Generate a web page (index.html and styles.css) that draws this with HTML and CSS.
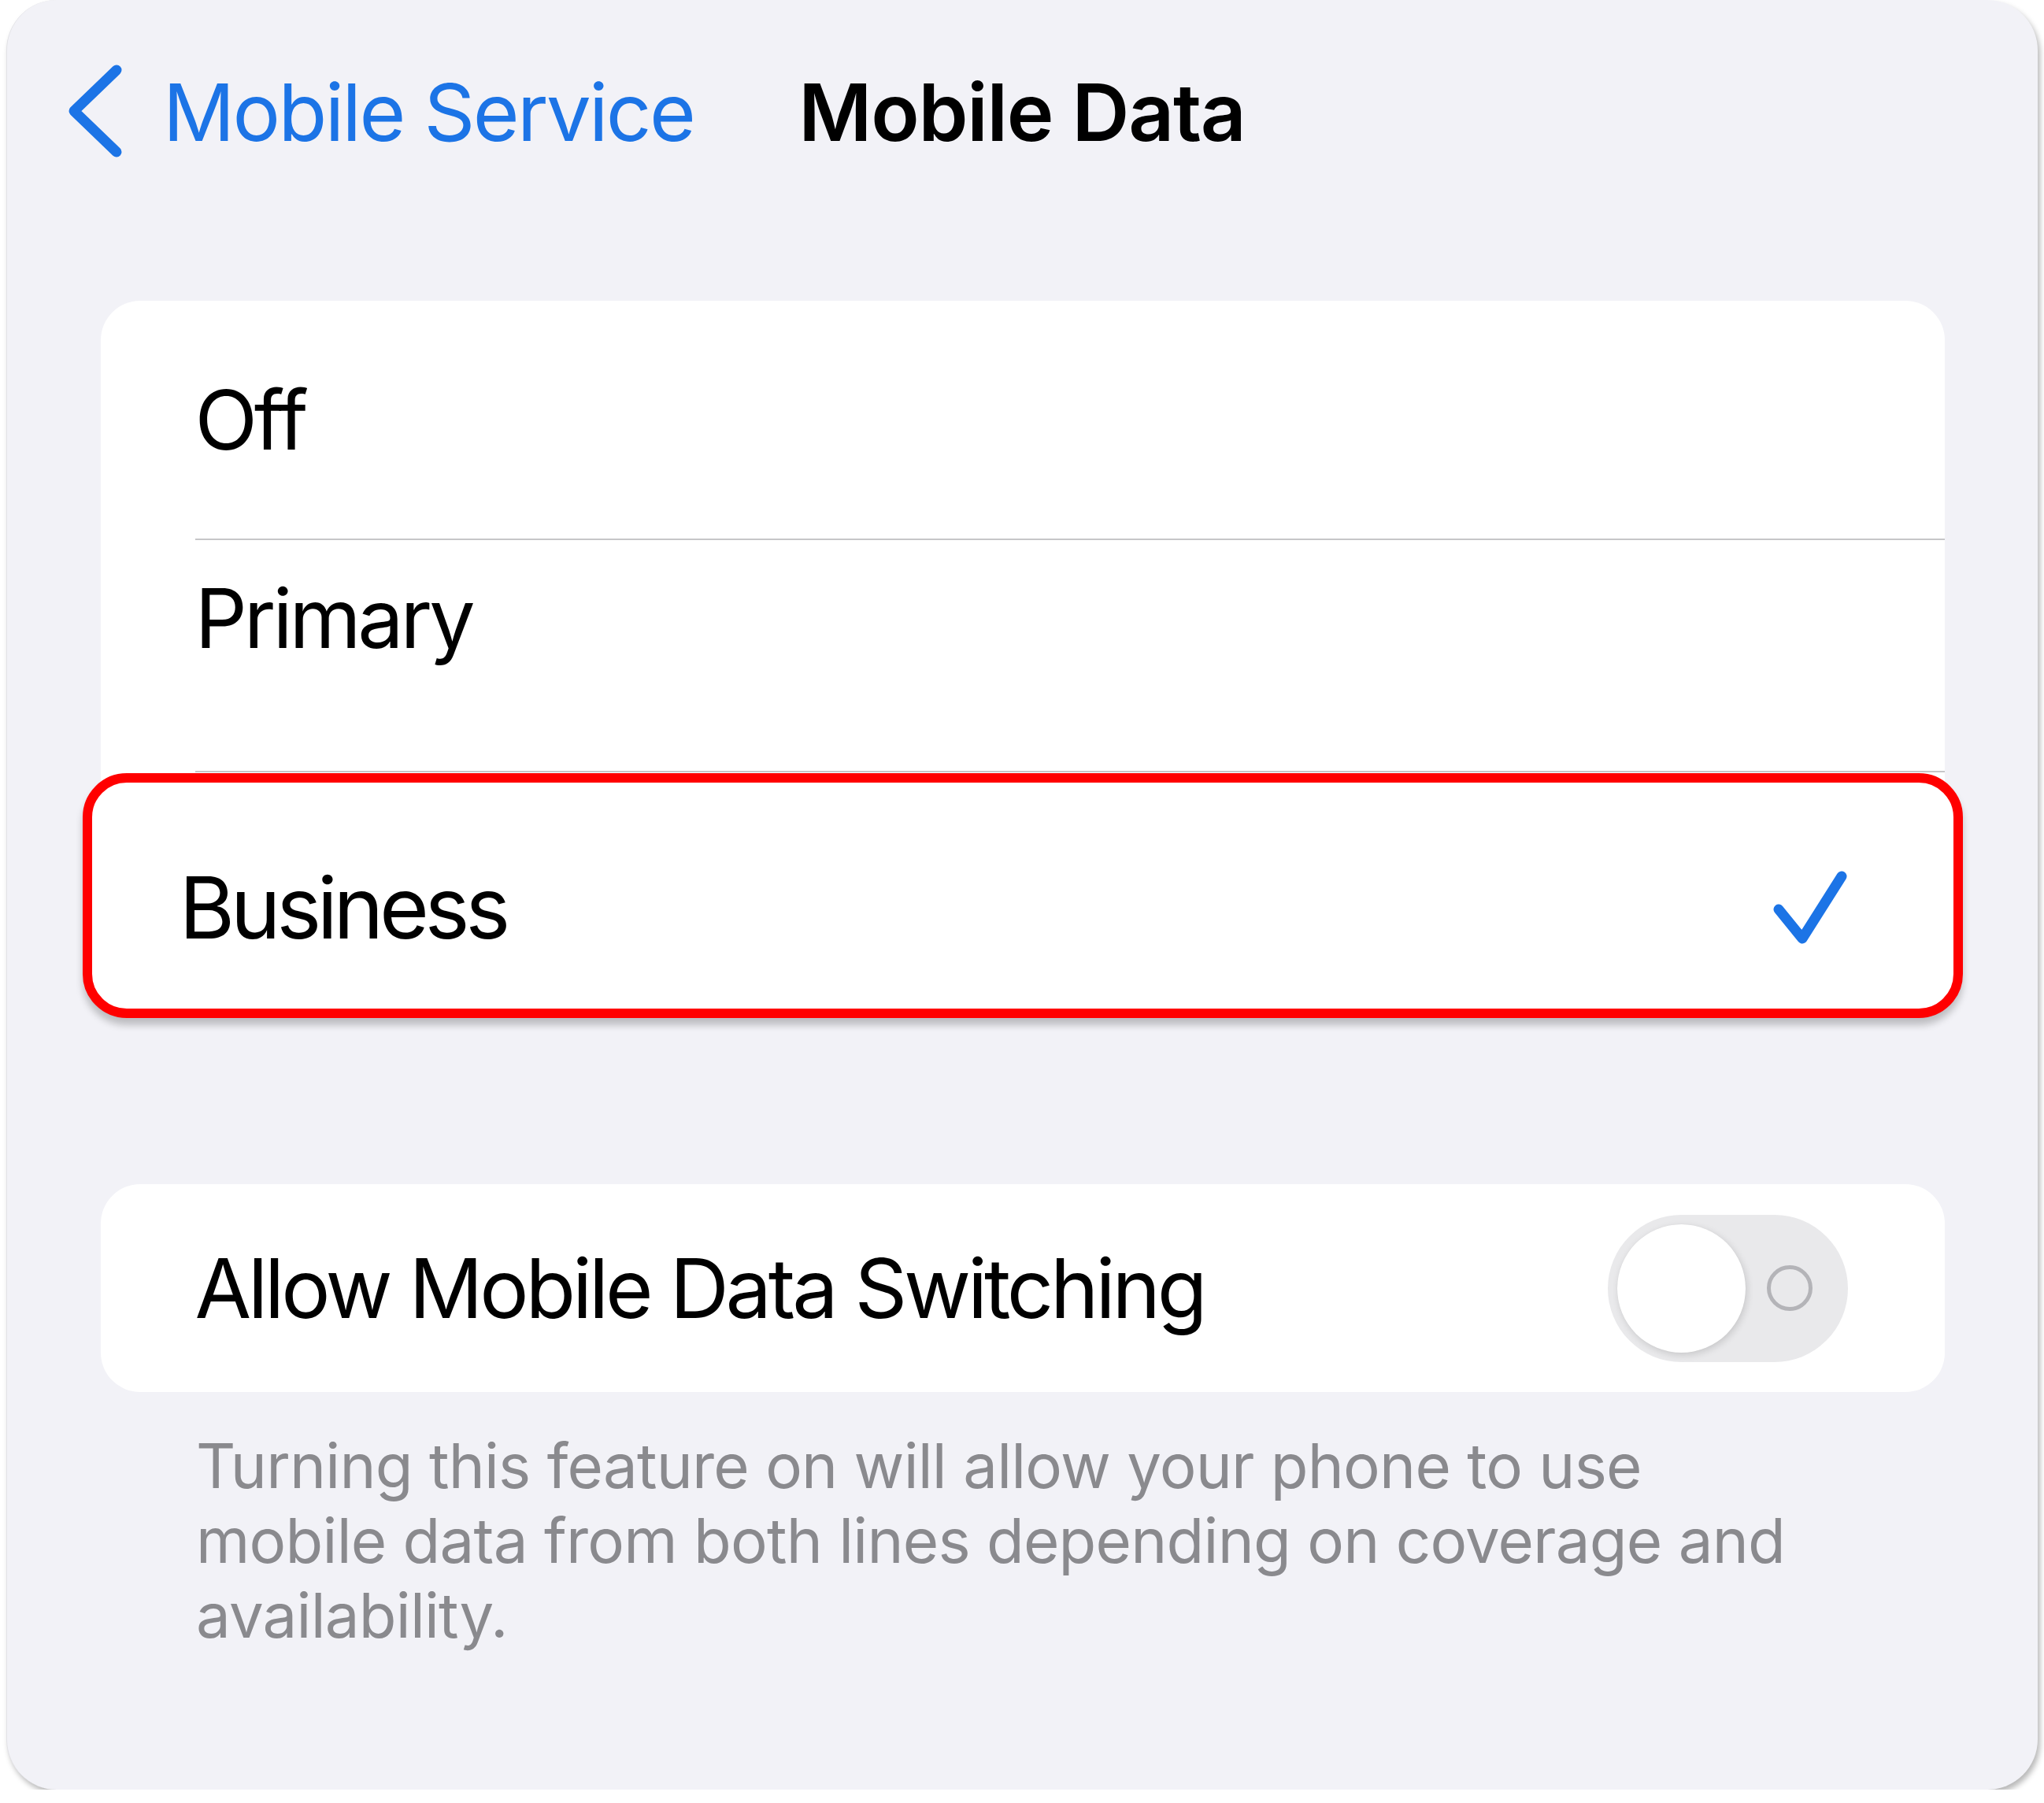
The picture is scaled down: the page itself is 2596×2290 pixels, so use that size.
FILE: index.html
```html
<!DOCTYPE html>
<html lang="en">
<head>
    <meta charset="UTF-8">
    <meta name="viewport" content="width=device-width, initial-scale=1.0">
    <title>Mobile Data</title>
    <link rel="stylesheet" href="styles.css">
</head>
<body>
    <div class="screen">
        <nav>
            <a class="back" href="#">
                <svg class="chevron" width="76" height="124" viewBox="0 0 76 124">
                    <path d="M63 8 L9 60 L63 112" fill="none" stroke="currentColor" stroke-width="13" stroke-linecap="round" stroke-linejoin="round"/>
                </svg>
                <span>Mobile Service</span>
            </a>
            <h1>Mobile Data</h1>
        </nav>

        <div class="group options">
            <div class="option option-off">Off</div>
            <div class="divider"></div>
            <div class="option option-primary">Primary</div>
            <div class="divider"></div>
            <div class="option option-selected">
                <span>Business</span>
                <svg class="check" width="100" height="130" viewBox="0 0 100 130">
                    <path d="M10 82 L40 119 L90 40" fill="none" stroke="currentColor" stroke-width="13" stroke-linecap="round" stroke-linejoin="round"/>
                </svg>
            </div>
        </div>

        <div class="group">
            <div class="option option-toggle">
                <span>Allow Mobile Data Switching</span>
                <div class="switch">
                    <div class="knob"></div>
                    <div class="ring"></div>
                </div>
            </div>
        </div>

        <p class="footnote">Turning this feature on will allow your phone to use mobile data from both lines depending on coverage and availability.</p>
    </div>
</body>
</html>
```

FILE: styles.css
```css
* {
    margin: 0;
    padding: 0;
    box-sizing: border-box;
    font-family: Inter, 'Noto Sans', sans-serif;
}

:root {
    --blue: #1c74e6;
    --page-gray: #f2f2f7;
    --white: #ffffff;
    --separator: #c6c6c8;
    --muted: #8a8a8e;
}

body {
    background-color: var(--white);
    color: #000;
}

.screen {
    width: 2580px;
    height: 2273px;
    margin-left: 8px;
    background-color: var(--page-gray);
    border-radius: 64px;
    box-shadow: 3px 5px 7px rgba(0, 0, 0, 0.28);
    border-left: 1px solid #e2e2e6;
    overflow: hidden;
}

nav {
    height: 286px;
    display: flex;
    align-items: center;
    padding-left: 76px;
}

.back {
    display: flex;
    align-items: center;
    color: var(--blue);
    text-decoration: none;
    font-size: 101px;
    line-height: 1.2;
    letter-spacing: -0.026em;
}

.chevron {
    margin-right: 46px;
}

nav h1 {
    margin-left: 133px;
    font-size: 101px;
    font-weight: 600;
    line-height: 1.2;
    letter-spacing: -0.012em;
}

.group {
    width: 2342px;
    margin: 0 auto;
    background-color: var(--white);
    border-radius: 50px;
}

.options {
    margin-top: 96px;
}

.option {
    display: flex;
    align-items: center;
    padding-left: 120px;
    font-size: 104px;
    line-height: 1.2;
    letter-spacing: -0.04em;
}

.option-off {
    height: 302px;
}

.option-primary {
    height: 293px;
    align-items: flex-start;
    padding-top: 37px;
}

.divider {
    height: 2px;
    margin-left: 120px;
    background-color: var(--separator);
}

/* highlighted choice, drawn a bit wider than its card */
.option-selected {
    height: 311px;
    margin: 1px -23px 0;
    padding: 0 132px 0 111px;
    justify-content: space-between;
    border: 12px solid #ff0000;
    border-radius: 56px;
    background-color: var(--white);
    box-shadow: 0 9px 10px rgba(0, 0, 0, 0.22);
    font-size: 108px;
    letter-spacing: -0.05em;
}

.option-selected span {
    padding-top: 30px;
}

.check {
    color: var(--blue);
}

.group + .group {
    margin-top: 211px;
}

.option-toggle {
    height: 264px;
    justify-content: space-between;
    padding-right: 123px;
}

.switch {
    width: 305px;
    height: 187px;
    border-radius: 94px;
    background-color: #e9e9eb;
    display: flex;
    align-items: center;
    padding-left: 12px;
}

.knob {
    width: 163px;
    height: 163px;
    border-radius: 50%;
    background-color: var(--white);
    box-shadow: 2px 3px 10px rgba(0, 0, 0, 0.14), 0 0 1px rgba(0, 0, 0, 0.08);
}

.ring {
    width: 58px;
    height: 58px;
    margin-left: 27px;
    border: 5px solid #b4b4b8;
    border-radius: 50%;
}

.footnote {
    width: 2060px;
    margin: 46px 0 0 240px;
    color: var(--muted);
    font-size: 78px;
    line-height: 95px;
    letter-spacing: -0.01em;
}
```
